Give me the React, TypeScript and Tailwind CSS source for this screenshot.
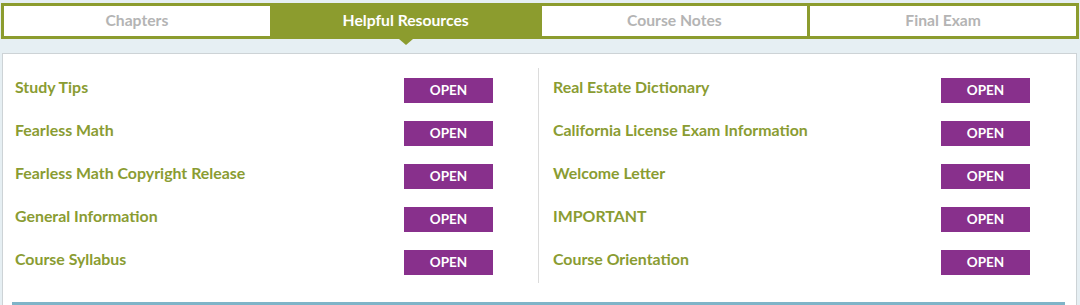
import React from "react";

const tabs = [
  { label: "Chapters", active: false },
  { label: "Helpful Resources", active: true },
  { label: "Course Notes", active: false },
  { label: "Final Exam", active: false },
];

const left = [
  "Study Tips",
  "Fearless Math",
  "Fearless Math Copyright Release",
  "General Information",
  "Course Syllabus",
];
const right = [
  "Real Estate Dictionary",
  "California License Exam Information",
  "Welcome Letter",
  "IMPORTANT",
  "Course Orientation",
];

function Row({ label }: { label: string }) {
  return (
    <div className="flex h-[25px] items-center justify-between">
      <span className="-mt-[7px] text-[15.9px] font-bold leading-5 text-[#8a9c32]">{label}</span>
      <button className="flex h-[25px] w-[89px] items-center justify-center bg-[#88308c] text-[13.5px] font-bold text-white">
        OPEN
      </button>
    </div>
  );
}

export default function App() {
  return (
    <div
      className="h-[305px] w-[1080px] overflow-hidden bg-[#e6eff3]"
      style={{ fontFamily: "Lato, 'Open Sans', sans-serif" }}
    >
      <div className="px-[1px] pt-[3px]">
        <div className="flex h-[36px] border-[3px] border-[#8c9c2e] bg-white">
          {tabs.map((t, i) => (
            <div
              key={t.label}
              className={`relative flex flex-1 items-center justify-center text-[15.7px] font-bold ${
                i > 0 ? "border-l-[3px] border-[#8c9c2e]" : ""
              } ${t.active ? "bg-[#8c9c2e] text-white" : "text-[#b4b4b4]"}`}
            >
              {t.label}
              {t.active && (
                <div className="absolute left-1/2 top-full mt-[3px] h-0 w-0 -translate-x-1/2 border-x-[7px] border-t-[6px] border-x-transparent border-t-[#8c9c2e]" />
              )}
            </div>
          ))}
        </div>
      </div>
      <div className="ml-[2px] mr-[3px] mt-[14px] border border-[#cdd3d6] bg-white pt-[14px]">
        <div className="grid grid-cols-[535px_1fr]">
          <div className="flex flex-col gap-[18px] pb-[8px] pl-3 pr-[45px] pt-[10px]">
            {left.map((l) => (
              <Row key={l} label={l} />
            ))}
          </div>
          <div className="flex flex-col gap-[18px] border-l border-[#dcdcdc] pb-[8px] pl-[14px] pr-[46px] pt-[10px]">
            {right.map((l) => (
              <Row key={l} label={l} />
            ))}
          </div>
        </div>
        <div className="ml-[9px] mr-[11px] mt-[19px] h-[6px] bg-[#7fb4c8]" />
      </div>
    </div>
  );
}
